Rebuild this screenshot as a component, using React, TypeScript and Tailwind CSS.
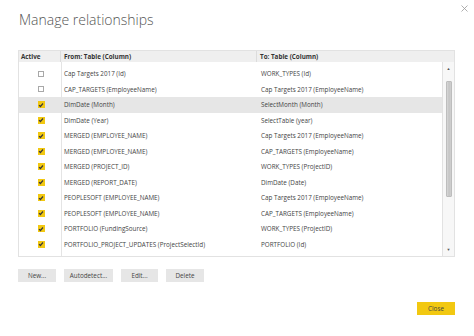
import React from "react";

const rows = [
  { from: "Cap Targets 2017 (Id)", to: "WORK_TYPES (Id)", active: false },
  { from: "CAP_TARGETS (EmployeeName)", to: "Cap Targets 2017 (EmployeeName)", active: false },
  { from: "DimDate (Month)", to: "SelectMonth (Month)", active: true, selected: true },
  { from: "DimDate (Year)", to: "SelectTable (year)", active: true },
  { from: "MERGED (EMPLOYEE_NAME)", to: "Cap Targets 2017 (EmployeeName)", active: true },
  { from: "MERGED (EMPLOYEE_NAME)", to: "CAP_TARGETS (EmployeeName)", active: true },
  { from: "MERGED (PROJECT_ID)", to: "WORK_TYPES (ProjectID)", active: true },
  { from: "MERGED (REPORT_DATE)", to: "DimDate (Date)", active: true },
  { from: "PEOPLESOFT (EMPLOYEE_NAME)", to: "Cap Targets 2017 (EmployeeName)", active: true },
  { from: "PEOPLESOFT (EMPLOYEE_NAME)", to: "CAP_TARGETS (EmployeeName)", active: true },
  { from: "PORTFOLIO (FundingSource)", to: "WORK_TYPES (ProjectID)", active: true },
  { from: "PORTFOLIO_PROJECT_UPDATES (ProjectSelectId)", to: "PORTFOLIO (Id)", active: true },
];

const Check = ({ on }: { on: boolean }) =>
  on ? (
    <span className="w-[7px] h-[7px] bg-[#f2c811] flex items-center justify-center">
      <svg width="6" height="6" viewBox="0 0 6 6">
        <path d="M1 3.1 L2.4 4.5 L5 1.5" fill="none" stroke="#3a3a3a" strokeWidth="1.2" />
      </svg>
    </span>
  ) : (
    <span className="w-[6px] h-[6px] border border-[#a8a8a8] bg-white" />
  );

const Btn = ({ label, w }: { label: string; w: string }) => (
  <button className={`${w} h-[13px] bg-[#e6e6e6] text-[6.3px] text-[#444] flex items-center justify-center`}>
    {label}
  </button>
);

export default function App() {
  return (
    <div
      className="w-[474px] h-[336px] bg-white flex flex-col pl-[18px] pr-[19px] text-[#444]"
      style={{ fontFamily: '"Open Sans", "Liberation Sans", sans-serif' }}
    >
      <div className="flex justify-between items-start">
        <h1 className="mt-[10px] ml-[1px] text-[14px] leading-[20px] font-light text-[#555]">
          Manage relationships
        </h1>
        <svg className="mt-[5px] mr-[-13px]" width="7" height="7" viewBox="0 0 7 7">
          <path d="M0.5 0.5 L6.5 6.5 M6.5 0.5 L0.5 6.5" stroke="#9a9a9a" strokeWidth="0.8" />
        </svg>
      </div>

      <div className="mt-[20px] w-[437px] h-[207px] border border-[#e2e2e2] flex flex-col">
        <div className="h-[11px] bg-[#efefef] flex text-[6.3px] font-bold text-[#333] leading-[11px]">
          <div className="w-[42px] pl-[2px] border-r border-[#dcdcdc]">Active</div>
          <div className="w-[196px] pl-[3px] border-r border-[#dcdcdc]">From: Table (Column)</div>
          <div className="pl-[3px]">To: Table (Column)</div>
        </div>
        <div className="flex-1 flex overflow-hidden">
          <div className="flex-1 flex flex-col pt-[4px] relative">
            <div className="absolute left-[42px] top-0 bottom-0 w-px bg-[#e4e4e4]" />
            {rows.map((r, i) => (
              <div
                key={i}
                className={`h-[15.5px] flex items-center text-[6.3px] shrink-0 ${r.selected ? "bg-[#e6e6e6]" : ""}`}
              >
                <div className="w-[43px] flex justify-center pl-[1px]">
                  <Check on={r.active} />
                </div>
                <div className="w-[196px] pl-[2px] whitespace-nowrap">{r.from}</div>
                <div className="pl-[3px] whitespace-nowrap">{r.to}</div>
              </div>
            ))}
          </div>
          <div className="w-[12px] border-l border-[#e2e2e2] bg-[#f7f7f7] flex flex-col items-center">
            <span className="mt-[4px] text-[4px] leading-[6px] text-[#555]">▲</span>
            <div className="mt-[9px] w-[6px] h-[116px] rounded-[1px] bg-gradient-to-r from-[#d8d8d8] via-[#c4c4c4] to-[#d0d0d0] border border-[#bdbdbd]" />
            <span className="mt-auto mb-[3px] text-[4px] leading-[6px] text-[#555]">▼</span>
          </div>
        </div>
      </div>

      <div className="mt-[12px] flex gap-[8px]">
        <Btn label="New..." w="w-[38px]" />
        <Btn label="Autodetect..." w="w-[49px]" />
        <Btn label="Edit..." w="w-[37px]" />
        <Btn label="Delete" w="w-[38px]" />
      </div>

      <div className="mt-[20px] flex justify-end">
        <button className="w-[38px] h-[13px] bg-[#f2c811] text-[6.3px] text-[#444] flex items-center justify-center">
          Close
        </button>
      </div>
    </div>
  );
}
